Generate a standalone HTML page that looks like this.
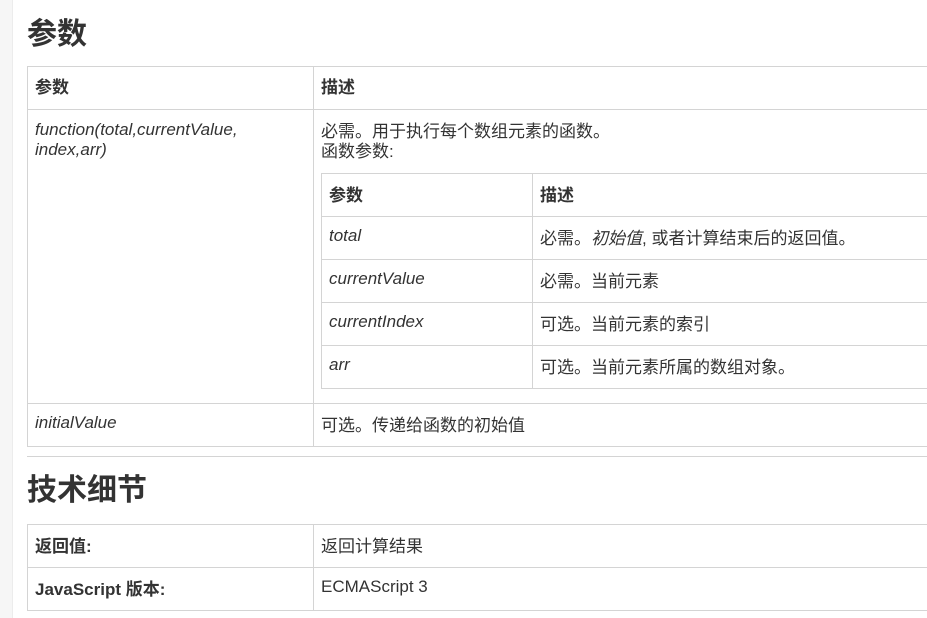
<!DOCTYPE html>
<html><head><meta charset="utf-8"><style>
body{margin:0;width:927px;height:618px;overflow:hidden;background:#fff;position:relative;font-family:"Liberation Sans","Noto Sans CJK SC",sans-serif;color:#333;font-size:17px}
.h{position:absolute;height:1px;background:#d4d4d4}
.v{position:absolute;width:1px;background:#d4d4d4}
.t{position:absolute;line-height:20px;white-space:nowrap}
.b{font-weight:bold}
.i{font-style:italic}
.title{position:absolute;font-size:30px;font-weight:bold;line-height:36px}
</style></head><body>
<div style="position:absolute;left:0;top:0;width:12px;height:618px;background:#f6f6f6;border-right:1px solid #ececec"></div>
<div class="title" style="left:27px;top:17px">参数</div>
<div class="h" style="left:27px;top:66px;width:900px"></div>
<div class="h" style="left:27px;top:109px;width:900px"></div>
<div class="h" style="left:27px;top:403px;width:900px"></div>
<div class="h" style="left:27px;top:446px;width:900px"></div>
<div class="v" style="left:27px;top:66px;height:381px"></div>
<div class="v" style="left:313px;top:66px;height:381px"></div>
<div class="t b" style="left:35px;top:78px">参数</div>
<div class="t b" style="left:321px;top:78px">描述</div>
<div class="t i" style="left:35px;top:120px">function(total,currentValue,<br>index,arr)</div>
<div class="t" style="left:321px;top:122px">必需。用于执行每个数组元素的函数。<br>函数参数:</div>
<div class="h" style="left:321px;top:173px;width:606px"></div>
<div class="h" style="left:321px;top:216px;width:606px"></div>
<div class="h" style="left:321px;top:259px;width:606px"></div>
<div class="h" style="left:321px;top:302px;width:606px"></div>
<div class="h" style="left:321px;top:345px;width:606px"></div>
<div class="h" style="left:321px;top:388px;width:606px"></div>
<div class="v" style="left:321px;top:173px;height:216px"></div>
<div class="v" style="left:532px;top:173px;height:216px"></div>
<div class="t b" style="left:329px;top:186px">参数</div>
<div class="t b" style="left:540px;top:186px">描述</div>
<div class="t i" style="left:329px;top:226px">total</div>
<div class="t" style="left:540px;top:229px">必需。<span class="i">初始值</span>, 或者计算结束后的返回值。</div>
<div class="t i" style="left:329px;top:269px">currentValue</div>
<div class="t" style="left:540px;top:272px">必需。当前元素</div>
<div class="t i" style="left:329px;top:312px">currentIndex</div>
<div class="t" style="left:540px;top:315px">可选。当前元素的索引</div>
<div class="t i" style="left:329px;top:355px">arr</div>
<div class="t" style="left:540px;top:358px">可选。当前元素所属的数组对象。</div>
<div class="t i" style="left:35px;top:413px">initialValue</div>
<div class="t" style="left:321px;top:416px">可选。传递给函数的初始值</div>
<div class="h" style="left:27px;top:456px;width:900px"></div>
<div class="title" style="left:27px;top:473px">技术细节</div>
<div class="h" style="left:27px;top:524px;width:900px"></div>
<div class="h" style="left:27px;top:567px;width:900px"></div>
<div class="h" style="left:27px;top:610px;width:900px"></div>
<div class="v" style="left:27px;top:524px;height:87px"></div>
<div class="v" style="left:313px;top:524px;height:87px"></div>
<div class="t b" style="left:35px;top:537px">返回值:</div>
<div class="t" style="left:321px;top:537px">返回计算结果</div>
<div class="t b" style="left:35px;top:580px">JavaScript 版本:</div>
<div class="t" style="left:321px;top:577px">ECMAScript 3</div>
</body></html>
